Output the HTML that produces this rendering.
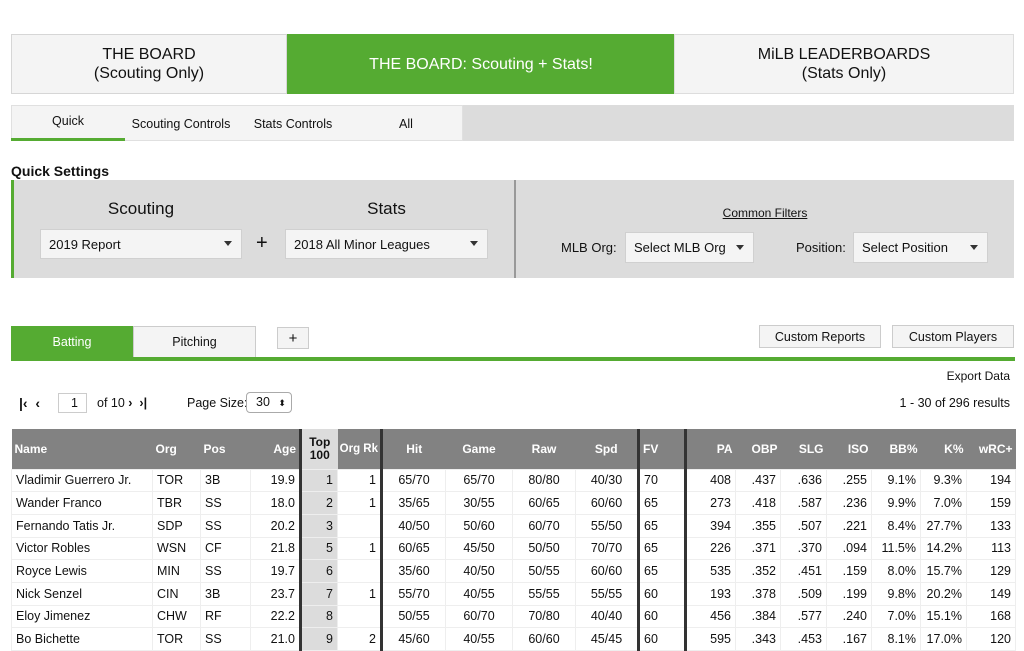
<!DOCTYPE html>
<html><head><meta charset="utf-8"><style>
*{box-sizing:border-box;margin:0;padding:0}
body{width:1024px;height:651px;overflow:hidden;background:#fff;font-family:"Liberation Sans",sans-serif;color:#111;position:relative}
.a{position:absolute}
.tab{position:absolute;top:34px;height:60px;display:flex;align-items:center;justify-content:center;text-align:center;font-size:16px;line-height:19px;border:1px solid #d6d6d6}
.sel{position:absolute;background:#f4f4f4;border:1px solid #d0d0d0;font-size:13px;padding-left:8px;display:flex;align-items:center}
.sel:after{content:"";position:absolute;right:9px;top:50%;margin-top:-3px;border-left:4px solid transparent;border-right:4px solid transparent;border-top:5px solid #333}
.btn{position:absolute;background:#f4f4f4;border:1px solid #ccc;font-size:12.5px;display:flex;align-items:center;justify-content:center}
table{position:absolute;left:11px;top:429px;border-collapse:collapse;table-layout:fixed;width:1004px;font-size:12.5px}
th{background:#828282;color:#fff;font-weight:bold;height:40px;font-size:12px;padding:0 3px;white-space:nowrap}
td{height:22.7px;border:1px solid #eee;padding:0 4px;white-space:nowrap}
.l{text-align:left}.r{text-align:right}.c{text-align:center}
.t{background:#dcdcdc}
.bl{border-left:3px solid #333!important}
</style></head><body>
<div class="tab" style="left:11px;width:276px;background:#f4f4f4">THE BOARD<br>(Scouting Only)</div>
<div class="tab" style="left:287px;width:388px;background:#55ab32;color:#fff;border-color:#55ab32">THE BOARD: Scouting + Stats!</div>
<div class="tab" style="left:674px;width:340px;background:#f4f4f4;border-color:#ddd">MiLB LEADERBOARDS<br>(Stats Only)</div>

<div class="a" style="left:11px;top:105px;width:1003px;height:36px;background:#dcdcdc"></div>
<div class="a" style="left:11px;top:105px;width:452px;height:36px;background:#f4f4f4;border:1px solid #e0e0e0"></div>
<div class="a" style="left:11px;top:138px;width:114px;height:3px;background:#55ab32"></div>
<div class="a" style="left:11px;top:114px;width:114px;text-align:center;font-size:12.5px">Quick</div>
<div class="a" style="left:125px;top:117px;width:112px;text-align:center;font-size:12.5px">Scouting Controls</div>
<div class="a" style="left:237px;top:117px;width:112px;text-align:center;font-size:12.5px">Stats Controls</div>
<div class="a" style="left:350px;top:117px;width:112px;text-align:center;font-size:12.5px">All</div>

<div class="a" style="left:11px;top:163px;font-size:14px;font-weight:bold">Quick Settings</div>
<div class="a" style="left:11px;top:180px;width:1003px;height:98px;background:#dcdcdc;border-left:3px solid #55ab32"></div>
<div class="a" style="left:514px;top:180px;width:2px;height:98px;background:#999"></div>
<div class="a" style="left:40px;top:199px;width:202px;text-align:center;font-size:17px">Scouting</div>
<div class="a" style="left:285px;top:199px;width:203px;text-align:center;font-size:17px">Stats</div>
<div class="sel" style="left:40px;top:229px;width:202px;height:30px">2019 Report</div>
<div class="a" style="left:256px;top:232px;font-size:20px">+</div>
<div class="sel" style="left:285px;top:229px;width:203px;height:30px">2018 All Minor Leagues</div>
<div class="a" style="left:516px;top:206px;width:498px;text-align:center;font-size:12px;text-decoration:underline">Common Filters</div>
<div class="a" style="left:561px;top:240px;font-size:13px">MLB Org:</div>
<div class="sel" style="left:625px;top:232px;width:129px;height:31px">Select MLB Org</div>
<div class="a" style="left:796px;top:240px;font-size:13px">Position:</div>
<div class="sel" style="left:853px;top:232px;width:135px;height:31px">Select Position</div>

<div class="btn" style="left:11px;top:326px;width:122px;height:32px;background:#55ab32;color:#fff;border-color:#55ab32">Batting</div>
<div class="btn" style="left:133px;top:326px;width:123px;height:32px">Pitching</div>
<div class="btn" style="left:277px;top:327px;width:32px;height:22px;font-size:15px">+</div>
<div class="btn" style="left:759px;top:325px;width:122px;height:23px">Custom Reports</div>
<div class="btn" style="left:892px;top:325px;width:122px;height:23px">Custom Players</div>
<div class="a" style="left:11px;top:357px;width:1004px;height:4px;background:#55ab32"></div>
<div class="a" style="right:14px;top:369px;font-size:12px">Export Data</div>

<div class="a" style="left:19px;top:395px;font-size:14px;font-weight:bold">|‹&nbsp;&nbsp;‹</div>
<div class="a" style="left:58px;top:393px;width:29px;height:20px;border:1px solid #ccc;font-size:12.5px;text-align:right;padding-right:8px;line-height:18px">1</div>
<div class="a" style="left:97px;top:396px;font-size:12.5px">of 10 <b>›</b>&nbsp;&nbsp;<b>›|</b></div>
<div class="a" style="left:187px;top:396px;font-size:12.5px">Page Size:</div>
<div class="a" style="left:246px;top:392px;width:46px;height:21px;border:1px solid #aaa;border-radius:4px;font-size:12.5px;padding-left:9px;line-height:19px">30 <span style="font-size:9px;margin-left:5px">⬍</span></div>
<div class="a" style="right:14px;top:396px;font-size:12.5px">1 - 30 of 296 results</div>

<table>
<colgroup><col style="width:141px"><col style="width:48px"><col style="width:50px"><col style="width:50px"><col style="width:37px"><col style="width:44px"><col style="width:64px"><col style="width:67px"><col style="width:63px"><col style="width:63px"><col style="width:47px"><col style="width:50px"><col style="width:45px"><col style="width:46px"><col style="width:45px"><col style="width:49px"><col style="width:46px"><col style="width:49px"></colgroup>
<tr><th class="l">Name</th><th class="l">Org</th><th class="l">Pos</th><th class="r">Age</th><th class="c bl" style="background:#dcdcdc;color:#111;line-height:13px;padding:0">Top<br>100</th><th class="r" style="padding:0 2px 0 0;font-size:11.5px">Org Rk</th><th class="c bl">Hit</th><th class="c">Game</th><th class="c">Raw</th><th class="c">Spd</th><th class="l bl">FV</th><th class="r bl">PA</th><th class="r">OBP</th><th class="r">SLG</th><th class="r">ISO</th><th class="r">BB%</th><th class="r">K%</th><th class="r">wRC+</th></tr>
<tr><td>Vladimir Guerrero Jr.</td><td>TOR</td><td>3B</td><td class="r">19.9</td><td class="r t bl">1</td><td class="r">1</td><td class="c bl">65/70</td><td class="c">65/70</td><td class="c">80/80</td><td class="c">40/30</td><td class="bl">70</td><td class="r bl">408</td><td class="r">.437</td><td class="r">.636</td><td class="r">.255</td><td class="r">9.1%</td><td class="r">9.3%</td><td class="r">194</td></tr>
<tr><td>Wander Franco</td><td>TBR</td><td>SS</td><td class="r">18.0</td><td class="r t bl">2</td><td class="r">1</td><td class="c bl">35/65</td><td class="c">30/55</td><td class="c">60/65</td><td class="c">60/60</td><td class="bl">65</td><td class="r bl">273</td><td class="r">.418</td><td class="r">.587</td><td class="r">.236</td><td class="r">9.9%</td><td class="r">7.0%</td><td class="r">159</td></tr>
<tr><td>Fernando Tatis Jr.</td><td>SDP</td><td>SS</td><td class="r">20.2</td><td class="r t bl">3</td><td class="r"></td><td class="c bl">40/50</td><td class="c">50/60</td><td class="c">60/70</td><td class="c">55/50</td><td class="bl">65</td><td class="r bl">394</td><td class="r">.355</td><td class="r">.507</td><td class="r">.221</td><td class="r">8.4%</td><td class="r">27.7%</td><td class="r">133</td></tr>
<tr><td>Victor Robles</td><td>WSN</td><td>CF</td><td class="r">21.8</td><td class="r t bl">5</td><td class="r">1</td><td class="c bl">60/65</td><td class="c">45/50</td><td class="c">50/50</td><td class="c">70/70</td><td class="bl">65</td><td class="r bl">226</td><td class="r">.371</td><td class="r">.370</td><td class="r">.094</td><td class="r">11.5%</td><td class="r">14.2%</td><td class="r">113</td></tr>
<tr><td>Royce Lewis</td><td>MIN</td><td>SS</td><td class="r">19.7</td><td class="r t bl">6</td><td class="r"></td><td class="c bl">35/60</td><td class="c">40/50</td><td class="c">50/55</td><td class="c">60/60</td><td class="bl">65</td><td class="r bl">535</td><td class="r">.352</td><td class="r">.451</td><td class="r">.159</td><td class="r">8.0%</td><td class="r">15.7%</td><td class="r">129</td></tr>
<tr><td>Nick Senzel</td><td>CIN</td><td>3B</td><td class="r">23.7</td><td class="r t bl">7</td><td class="r">1</td><td class="c bl">55/70</td><td class="c">40/55</td><td class="c">55/55</td><td class="c">55/55</td><td class="bl">60</td><td class="r bl">193</td><td class="r">.378</td><td class="r">.509</td><td class="r">.199</td><td class="r">9.8%</td><td class="r">20.2%</td><td class="r">149</td></tr>
<tr><td>Eloy Jimenez</td><td>CHW</td><td>RF</td><td class="r">22.2</td><td class="r t bl">8</td><td class="r"></td><td class="c bl">50/55</td><td class="c">60/70</td><td class="c">70/80</td><td class="c">40/40</td><td class="bl">60</td><td class="r bl">456</td><td class="r">.384</td><td class="r">.577</td><td class="r">.240</td><td class="r">7.0%</td><td class="r">15.1%</td><td class="r">168</td></tr>
<tr><td>Bo Bichette</td><td>TOR</td><td>SS</td><td class="r">21.0</td><td class="r t bl">9</td><td class="r">2</td><td class="c bl">45/60</td><td class="c">40/55</td><td class="c">60/60</td><td class="c">45/45</td><td class="bl">60</td><td class="r bl">595</td><td class="r">.343</td><td class="r">.453</td><td class="r">.167</td><td class="r">8.1%</td><td class="r">17.0%</td><td class="r">120</td></tr>
</table>
</body></html>
